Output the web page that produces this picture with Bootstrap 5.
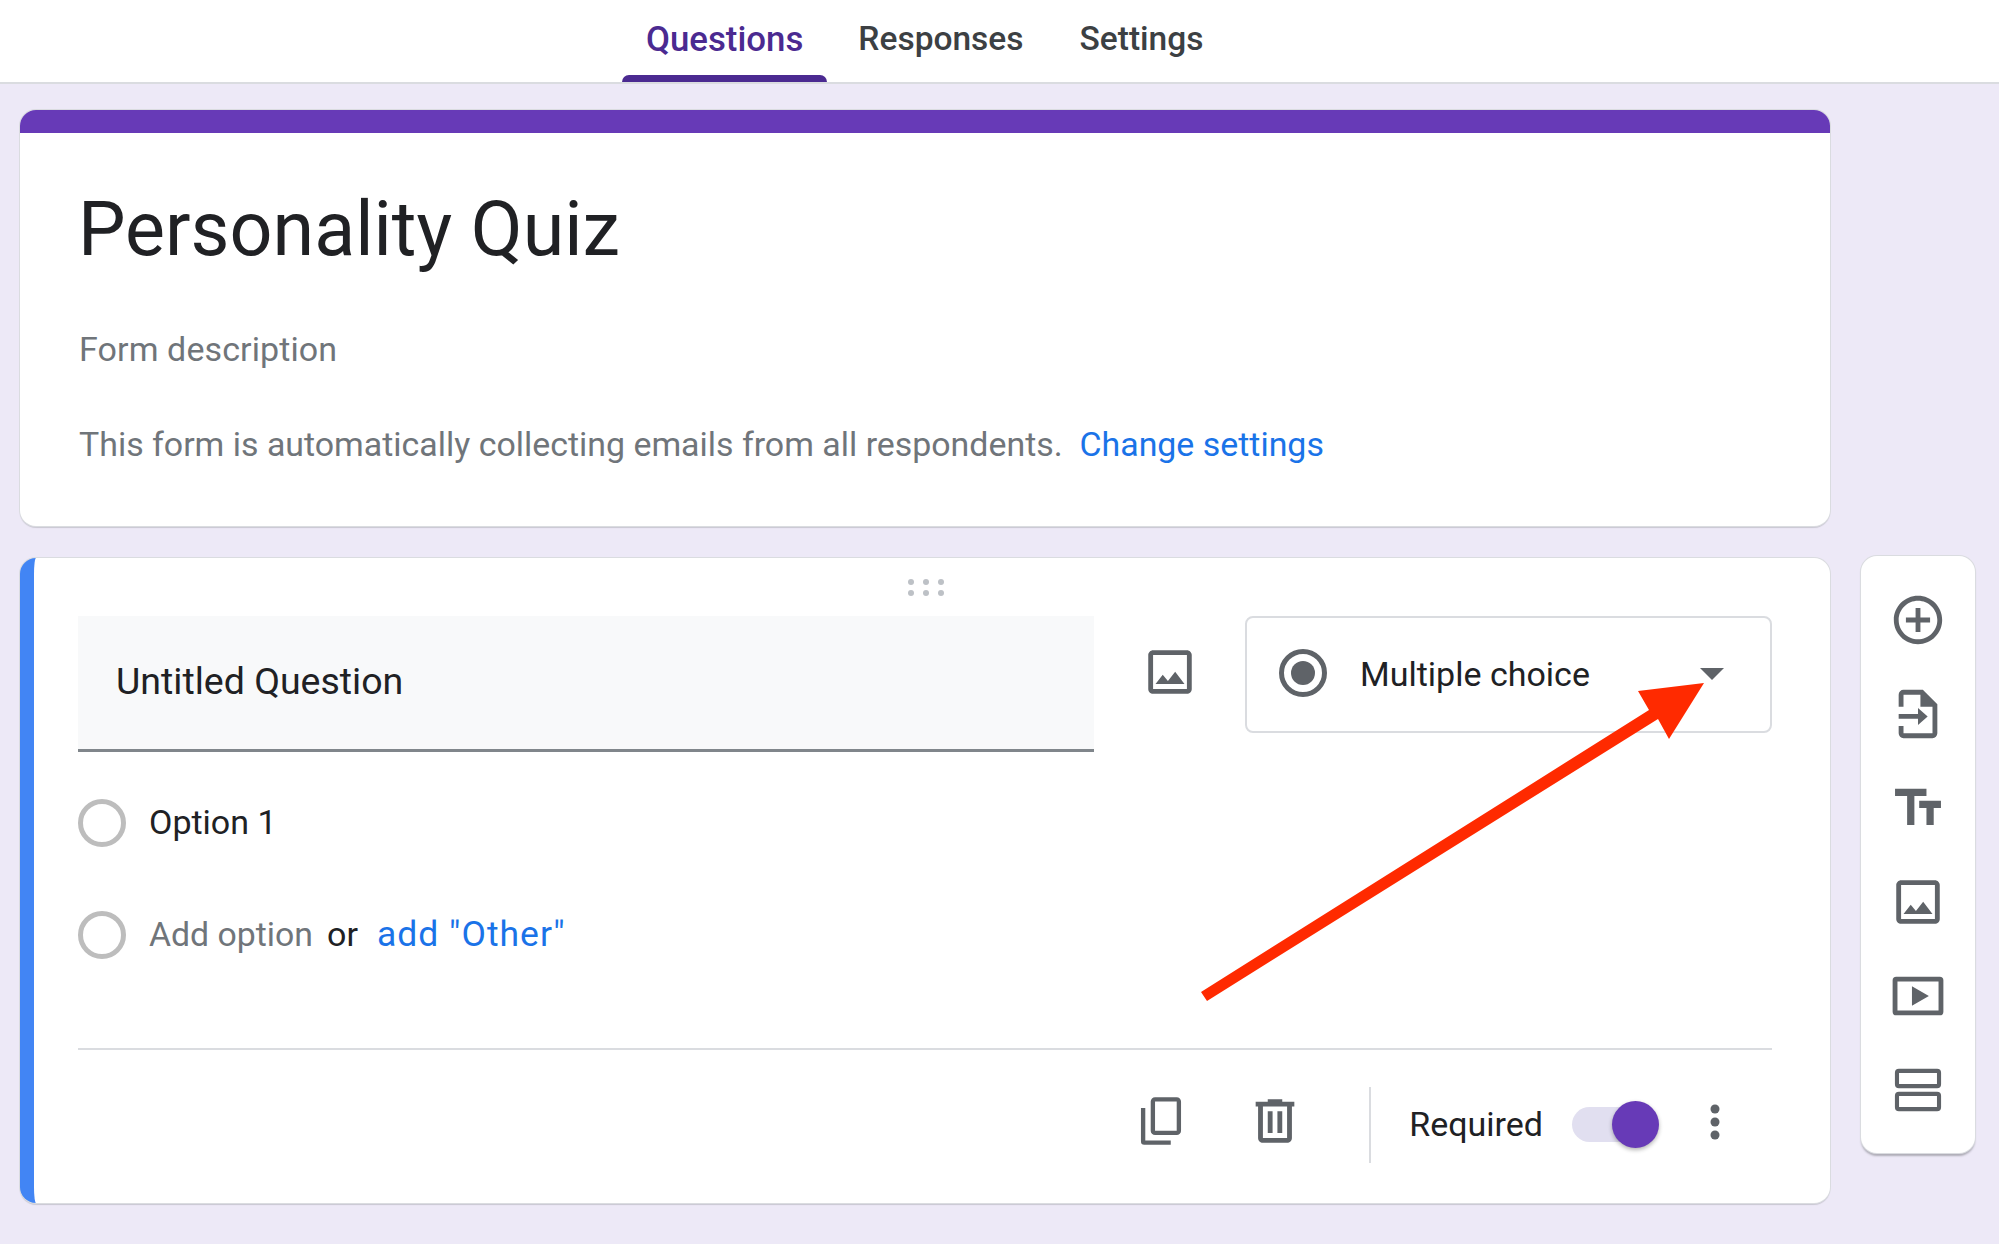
<!DOCTYPE html>
<html lang="en">
<head>
    <meta charset="UTF-8" />
    <title>Personality Quiz</title>
    <link href="https://cdn.jsdelivr.net/npm/bootstrap@5.3.0/dist/css/bootstrap.min.css" rel="stylesheet">
    <style>
        body {
            background: #ede9f7;
            font-family: Roboto, "Liberation Sans", sans-serif;
            color: #202124;
            height: 1244px;
            overflow: hidden;
            position: relative;
        }
        .topbar {
            background: #fff;
            height: 84px;
            border-bottom: 2px solid #dadce0;
            padding-left: 622px;
        }
        .tab-link {
            font-size: 33.500px;
            font-weight: 500;
            color: #3c4043;
            padding: 16px 28px 0;
            height: 82px;
            text-decoration: none;
            position: relative;
            line-height: 46px;
        }
        .tab-link.on { color: #4b2a91; font-size: 34.800px; padding: 16px 24px 0; margin-right: 3px; }
        .tab-link.on::after {
            content: "";
            position: absolute;
            left: 0; right: 0; bottom: 0;
            height: 7px;
            background: #4b2a91;
            border-radius: 7px 7px 0 0;
        }
        .page-main { padding: 26px 0 0 20px; gap: 31px; }
        .form-col { width: 1810px; gap: 32px; }
        .form-card {
            border: 0;
            border-radius: 16px;
            box-shadow: 0 0 0 1px #dadce0, 0 2px 1px rgba(60,64,67,.2);
            overflow: hidden;
        }
        .strip { height: 23px; background: #673ab7; }
        .form-head { padding: 48px 59px 0; height: 393px; }
        .quiz-title { font-size: 75.400px; font-weight: 400; line-height: 96px; margin: 0 0 0 -1px; }
        .quiz-desc { font-size: 34px; color: #70757a; line-height: 44px; margin: 50px 0 0; letter-spacing: .1px; }
        .quiz-note { font-size: 33.900px; color: #70757a; line-height: 44px; margin: 52px 0 0; }
        .blue-link { color: #1a73e8; text-decoration: none; }
        .q-card {
            height: 645px;
            border-left: 14px solid #4285f4;
            padding: 0 58px 0 44px;
            position: relative;
        }
        .grip { height: 58px; padding-left: 2px; }
        .q-input {
            width: 1016px;
            height: 136px;
            background: #f8f9fa;
            border-bottom: 3px solid #80868b;
            padding: 0 0 2px 38px;
            font-size: 37.500px;
        }
        .img-btn { width: 58px; height: 58px; margin: 27px 0 0 47px; color: #5f6368; }
        .type-select {
            width: 527px;
            height: 117px;
            margin-left: 46px;
            border: 2px solid #dadce0;
            border-radius: 8px;
            padding: 0 46px 0 32px;
            font-size: 34px;
        }
        .type-radio { margin-bottom: 3px; }
        .type-name { margin-left: 33px; }
        .opt-row { font-size: 34px; height: 112px; margin-top: 15px; }
        .opt-row + .opt-row { margin-top: 0; padding-top: 1px; }
        .opt-ring {
            width: 48px; height: 48px;
            border: 5px solid #bdbdbd;
            border-radius: 50%;
            margin-right: 23px;
        }
        .grey-txt { color: #70757a; font-size: 33.800px; }
        .or-txt { margin: 0 19px 0 14px; }
        .other-link { font-size: 35.500px; letter-spacing: 1px; }
        .q-sep { border-top: 2px solid #dadce0; margin-top: 58px; }
        .q-foot { height: 153px; padding: 0 50px 4px 0; color: #5f6368; }
        .copy-ic { margin-bottom: 8px; }
        .trash-ic { margin: 0 65px 8px 59px; }
        .foot-rule { width: 2px; height: 76px; background: #dadce0; margin-right: 38px; }
        .req-label { font-size: 34px; color: #202124; }
        .req-track { width: 78px; height: 35px; background: #e1dff0; border-radius: 18px; margin: 0 58px 0 29px; position: relative; }
        .req-thumb {
            position: absolute; right: -9px; top: -6px;
            width: 47px; height: 47px; border-radius: 50%;
            background: #673ab7;
            box-shadow: 0 2px 4px rgba(0,0,0,.3);
        }
        .more-ic { margin-bottom: 6px; }
        .side-bar {
            width: 114px;
            height: 597px;
            margin-top: 446px;
            border: 0;
            border-radius: 16px;
            box-shadow: 0 0 0 1px #dadce0, 0 3px 2px rgba(60,64,67,.35);
            color: #5f6368;
            padding-top: 35px;
            gap: 36px;
            align-items: center;
        }
        .side-bar svg { width: 58px; height: 58px; display: block; }
        .arrow-over { position: absolute; left: 0; top: 0; pointer-events: none; }
    </style>
</head>
<body>
    <nav class="topbar d-flex">
        <a class="tab-link on" href="#">Questions</a>
        <a class="tab-link" href="#">Responses</a>
        <a class="tab-link" href="#">Settings</a>
    </nav>

    <main class="page-main d-flex align-items-start">
        <div class="form-col d-flex flex-column">
            <section class="card form-card">
                <div class="strip"></div>
                <div class="form-head">
                    <h1 class="quiz-title">Personality Quiz</h1>
                    <p class="quiz-desc">Form description</p>
                    <p class="quiz-note">This form is automatically collecting emails from all respondents.&nbsp; <a class="blue-link" href="#">Change settings</a></p>
                </div>
            </section>

            <section class="card form-card q-card">
                <div class="grip d-flex justify-content-center align-items-center">
                    <svg width="38" height="20" viewBox="0 0 38 20" fill="#bdc1c6"><circle cx="4" cy="5" r="3"/><circle cx="19" cy="5" r="3"/><circle cx="34" cy="5" r="3"/><circle cx="4" cy="16" r="3"/><circle cx="19" cy="16" r="3"/><circle cx="34" cy="16" r="3"/></svg>
                </div>
                <div class="d-flex align-items-start">
                    <div class="q-input d-flex align-items-center">Untitled Question</div>
                    <svg class="img-btn" viewBox="0 0 24 24" fill="currentColor"><path d="M19 5v14H5V5h14m0-2H5c-1.1 0-2 .9-2 2v14c0 1.1.9 2 2 2h14c1.1 0 2-.9 2-2V5c0-1.1-.9-2-2-2zm-4.86 8.86l-3 3.87L9 13.14 6 17h12l-3.86-5.14z"/></svg>
                    <div class="type-select d-flex align-items-center">
                        <svg class="type-radio" width="48" height="48" viewBox="0 0 48 48"><circle cx="24" cy="24" r="21.500" fill="none" stroke="#5f6368" stroke-width="5"/><circle cx="24" cy="24" r="12" fill="#5f6368"/></svg>
                        <span class="type-name flex-grow-1">Multiple choice</span>
                        <svg width="24" height="12" viewBox="0 0 24 12" fill="#5f6368"><path d="M0 0h24L12 12z"/></svg>
                    </div>
                </div>
                <div class="opt-row d-flex align-items-center"><span class="opt-ring"></span>Option 1</div>
                <div class="opt-row d-flex align-items-center"><span class="opt-ring"></span><span class="grey-txt">Add option</span><span class="or-txt">or</span><a class="blue-link other-link" href="#">add "Other"</a></div>
                <div class="q-sep"></div>
                <div class="q-foot d-flex align-items-center justify-content-end">
                    <svg class="copy-ic" width="52" height="52" viewBox="0 0 24 24" fill="none" stroke="currentColor" stroke-width="2"><rect x="8.250" y="2" width="12" height="15.500" rx="1"/><path d="M3.750 6v15.500a.5.5 0 0 0 .5.5H16.500"/></svg>
                    <svg class="trash-ic" width="58" height="58" viewBox="0 0 24 24" fill="currentColor"><path d="M15 4V3H9v1H4v2h1v13c0 1.1.9 2 2 2h10c1.1 0 2-.9 2-2V6h1V4h-5zm2 15H7V6h10v13zM9 8h2v9H9zm4 0h2v9h-2z"/></svg>
                    <div class="foot-rule"></div>
                    <span class="req-label">Required</span>
                    <div class="req-track"><span class="req-thumb"></span></div>
                    <svg class="more-ic" width="14" height="36" viewBox="0 0 14 36" fill="currentColor"><circle cx="7" cy="5" r="4.500"/><circle cx="7" cy="18" r="4.500"/><circle cx="7" cy="31" r="4.500"/></svg>
                </div>
            </section>
        </div>

        <aside class="card side-bar d-flex flex-column">
            <svg viewBox="0 0 24 24" fill="currentColor"><path d="M13 7h-2v4H7v2h4v4h2v-4h4v-2h-4V7zm-1-5C6.48 2 2 6.48 2 12s4.48 10 10 10 10-4.48 10-10S17.52 2 12 2zm0 18c-4.41 0-8-3.59-8-8s3.59-8 8-8 8 3.59 8 8-3.59 8-8 8z"/></svg>
            <svg viewBox="0 0 24 24" fill="currentColor"><path d="M6 2h8l6 6v12a2 2 0 0 1-2 2H6a2 2 0 0 1-2-2v-3h2v3h12V9h-5V4H6v5H4V4a2 2 0 0 1 2-2zM4 12h8V9.500l4 3.500-4 3.500V14H4z"/></svg>
            <svg viewBox="0 0 24 24" fill="currentColor"><path d="M2.500 4v3h5v12h3V7h5V4h-13zm19 5h-9v3h3v7h3v-7h3V9z"/></svg>
            <svg viewBox="0 0 24 24" fill="currentColor"><path d="M19 5v14H5V5h14m0-2H5c-1.100 0-2 .9-2 2v14c0 1.100.9 2 2 2h14c1.100 0 2-.9 2-2V5c0-1.100-.9-2-2-2zm-4.860 8.860l-3 3.870L9 13.140 6 17h12l-3.860-5.140z"/></svg>
            <svg viewBox="0 0 24 24" fill="currentColor"><path d="M3 4h18a1.500 1.500 0 0 1 1.500 1.500v13A1.500 1.500 0 0 1 21 20H3a1.500 1.500 0 0 1-1.500-1.500v-13A1.500 1.500 0 0 1 3 4zm.500 2v12h17V6zM9.500 8l7 4-7 4z"/></svg>
            <svg viewBox="0 0 24 24" fill="none" stroke="currentColor" stroke-width="1.700"><rect x="3.300" y="4.100" width="17.400" height="6.300" rx=".8"/><rect x="3.300" y="13.600" width="17.400" height="6.300" rx=".8"/></svg>
        </aside>
    </main>

    <svg class="arrow-over" width="1999" height="1244" viewBox="0 0 1999 1244"><polygon fill="#ff2a00" points="1201,992 1649,710 1638,691 1704,683 1669,739 1658,719 1207,1001"/></svg>

    <script src="https://cdn.jsdelivr.net/npm/bootstrap@5.3.0/dist/js/bootstrap.bundle.min.js"></script>
</body>
</html>
